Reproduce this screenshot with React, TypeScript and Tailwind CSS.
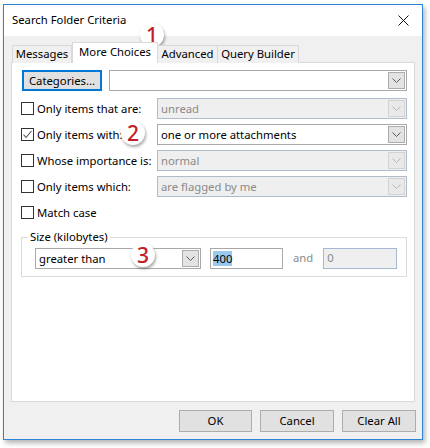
import React from "react";

function Chevron({ disabled }: { disabled?: boolean }) {
  return (
    <svg width="9" height="5" viewBox="0 0 9 5" className="block">
      <polyline
        points="0.5,0.5 4.5,4.5 8.5,0.5"
        fill="none"
        stroke={disabled ? "#b9b9b9" : "#5a5a5a"}
        strokeWidth="1"
      />
    </svg>
  );
}

function Combo({
  text,
  disabled,
  className,
}: {
  text: string;
  disabled?: boolean;
  className: string;
}) {
  return (
    <div
      className={
        "flex h-[21px] shrink-0 items-center border " +
        (disabled
          ? "border-[#b1bccd] bg-[#efefef] text-[#8a8a8a] "
          : "border-[#a9a9a9] bg-white text-black ") +
        className
      }
    >
      <div className="flex-1 truncate whitespace-nowrap pl-[3px] leading-[19px]">{text}</div>
      <div
        className={
          "mr-[1px] flex h-[17px] w-[17px] items-center justify-center border " +
          (disabled ? "border-[#d3d3d3] bg-[#e9e9e9]" : "border-[#acacac] bg-[#e3e3e3]")
        }
      >
        <Chevron disabled={disabled} />
      </div>
    </div>
  );
}

function Checkbox({ checked }: { checked?: boolean }) {
  return (
    <div className="flex h-[13px] w-[13px] shrink-0 items-center justify-center border border-[#333333] bg-white">
      {checked && (
        <svg width="11" height="11" viewBox="0 0 11 11">
          <polyline points="1.5,5.5 4,8.5 9.5,2" fill="none" stroke="#505050" strokeWidth="1.1" />
        </svg>
      )}
    </div>
  );
}

function CheckRow({
  label,
  checked,
  combo,
}: {
  label: string;
  checked?: boolean;
  combo?: { text: string; disabled?: boolean };
}) {
  return (
    <div className="flex h-[21px] items-center">
      <Checkbox checked={checked} />
      <span className="ml-[3px] shrink-0 whitespace-nowrap leading-none">{label}</span>
      {combo && <Combo text={combo.text} disabled={combo.disabled} className="ml-auto w-[250px]" />}
    </div>
  );
}

function Badge({ n, className }: { n: string; className: string }) {
  return (
    <div
      className={
        "absolute flex h-[24px] w-[24px] items-center justify-center rounded-full bg-white text-[21px] font-medium leading-none text-[#bf2026] shadow-[1px_2px_3px_rgba(0,0,0,0.35)] " +
        className
      }
    >
      {n}
    </div>
  );
}

function Button({ label, className }: { label: string; className?: string }) {
  return (
    <div
      className={
        "flex h-[22px] items-center justify-center whitespace-nowrap border border-[#adadad] bg-[#e1e1e1] leading-none " +
        (className || "")
      }
    >
      {label}
    </div>
  );
}

export default function App() {
  return (
    <div
      className="relative h-[448px] w-[430px] overflow-hidden bg-white text-[11.3px] text-black"
      style={{ fontFamily: '"Noto Sans", "Open Sans", sans-serif' }}
    >
      <div className="ml-[3px] mt-[4px] flex h-[436px] w-[420px] flex-col border border-[#2b84d6] bg-[#f0f0f0] shadow-[2px_3px_5px_rgba(0,0,0,0.3)]">
        {/* Title bar */}
        <div className="flex h-[31px] items-center justify-between bg-white pl-[8px] pr-[10px]">
          <span className="whitespace-nowrap">Search Folder Criteria</span>
          <svg width="11" height="11" viewBox="0 0 11 11" className="mr-[3px]">
            <line x1="0.5" y1="0.5" x2="10.5" y2="10.5" stroke="#111" strokeWidth="1" />
            <line x1="10.5" y1="0.5" x2="0.5" y2="10.5" stroke="#111" strokeWidth="1" />
          </svg>
        </div>

        {/* Body */}
        <div className="flex flex-1 flex-col pt-[6px]">
          {/* Tabs */}
          <div className="relative z-10 -mb-px ml-[8px] flex h-[21px] items-end whitespace-nowrap">
            <div className="flex h-[18px] w-[60px] items-center justify-center border border-b-0 border-[#d9d9d9] bg-[#f0f0f0]">
              Messages
            </div>
            <div className="flex h-[21px] w-[86px] items-center justify-center border border-b-0 border-[#d9d9d9] bg-white pb-[2px]">
              More Choices
            </div>
            <div className="flex h-[18px] w-[60px] items-center justify-center border border-b-0 border-l-0 border-[#d9d9d9] bg-[#f0f0f0]">
              Advanced
            </div>
            <div className="flex h-[18px] w-[81px] items-center justify-center border border-b-0 border-l-0 border-[#d9d9d9] bg-[#f0f0f0]">
              Query Builder
            </div>
          </div>

          {/* Panel */}
          <div className="mx-[7px] flex h-[340px] flex-col border border-[#d9d9d9] bg-white pl-[9px] pr-[7px] pt-[7px]">
            <div className="flex h-[21px] items-center">
              <div className="ml-px flex h-[21px] w-[80px] items-center justify-center whitespace-nowrap border-2 border-[#0078d7] bg-[#e1e1e1] leading-none">
                Categories...
              </div>
              <Combo text="" className="ml-auto w-[298px]" />
            </div>

            <div className="mt-[7px] flex flex-col gap-[5px]">
              <CheckRow label="Only items that are:" combo={{ text: "unread", disabled: true }} />
              <CheckRow label="Only items with:" checked combo={{ text: "one or more attachments" }} />
              <CheckRow label="Whose importance is:" combo={{ text: "normal", disabled: true }} />
              <CheckRow label="Only items which:" combo={{ text: "are flagged by me", disabled: true }} />
              <CheckRow label="Match case" />
            </div>

            {/* Size group */}
            <div className="relative mt-[14px] border border-[#dcdcdc] pb-[7px] pl-[13px] pt-[10px]">
              <span className="absolute -top-[9px] left-[6px] whitespace-nowrap bg-white px-[2px] leading-[16px]">
                Size (kilobytes)
              </span>
              <div className="flex items-center">
                <Combo text="greater than" className="w-[166px]" />
                <div className="ml-[9px] flex h-[21px] w-[73px] items-center border border-[#a9a9a9] bg-white pl-[2px]">
                  <span className="bg-[#99c9ef] leading-[15px]">400</span>
                </div>
                <span className="ml-[10px] text-[#8a8a8a]">and</span>
                <div className="ml-[10px] flex h-[21px] w-[74px] items-center border border-[#a7b8d4] bg-[#efefef] pl-[3px] text-[#8a8a8a]">
                  0
                </div>
              </div>
            </div>
          </div>

          {/* Buttons */}
          <div className="mt-[8px] flex justify-end gap-[8px] pr-[6px]">
            <Button label="OK" className="w-[73px]" />
            <Button label="Cancel" className="w-[74px]" />
            <Button label="Clear All" className="w-[74px]" />
          </div>
        </div>
      </div>

      <Badge n="1" className="left-[140px] top-[23px]" />
      <Badge n="2" className="left-[121px] top-[121px]" />
      <Badge n="3" className="left-[131px] top-[243px]" />
    </div>
  );
}
